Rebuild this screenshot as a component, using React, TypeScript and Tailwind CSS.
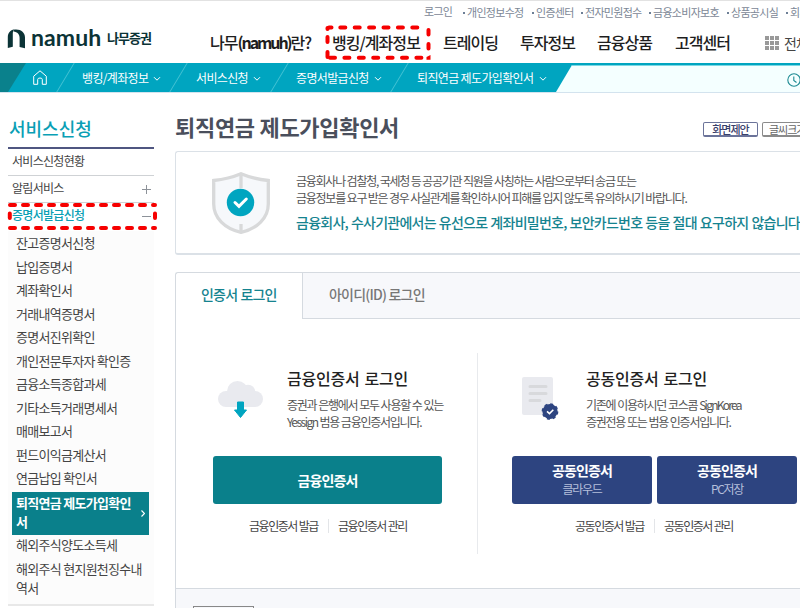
import React from "react";

const util = [
  { t: "개인정보수정", w: "w-[69px]" },
  { t: "인증센터", w: "w-[49px]" },
  { t: "전자민원접수", w: "w-[68px]" },
  { t: "금융소비자보호", w: "w-[78px]" },
  { t: "상품공시실", w: "w-[59px]" },
  { t: "회사소개", w: "w-[60px]" },
];

const nav = [
  { t: "뱅킹/계좌정보", w: "w-[111px]" },
  { t: "트레이딩", w: "w-[77px]" },
  { t: "투자정보", w: "w-[77px]" },
  { t: "금융상품", w: "w-[78px]" },
  { t: "고객센터", w: "w-[89px]" },
];

const crumbs = [
  { t: "뱅킹/계좌정보", w: "w-[113px]", p: "pl-[16px]" },
  { t: "서비스신청", w: "w-[101px]", p: "pl-[17px]" },
  { t: "증명서발급신청", w: "w-[120px]", p: "pl-[16px]" },
  { t: "퇴직연금 제도가입확인서", w: "w-[164px]", p: "pl-[17px]" },
];

const before = [
  "잔고증명서신청",
  "납입증명서",
  "계좌확인서",
  "거래내역증명서",
  "증명서진위확인",
  "개인전문투자자 확인증",
  "금융소득종합과세",
  "기타소득거래명세서",
  "매매보고서",
  "펀드이익금계산서",
  "연금납입 확인서",
];

function Chevron({ className = "" }: { className?: string }) {
  return (
    <svg className={className} width="8" height="6" viewBox="0 0 8 6" fill="none" stroke="currentColor" strokeWidth="1">
      <path d="M1 1.2 4 4.2 7 1.2" />
    </svg>
  );
}

function Logo() {
  return (
    <div className="flex h-[22px] items-center text-[#0b3336]">
      <svg className="mt-[1px]" width="18" height="20" viewBox="0 0 18 20">
        <path d="M.8 19V8.500C.8 4 3.500 1 7 .6C6 2 5.800 3.500 5.800 5.500V17.800Z" fill="#0b3336" />
        <path d="M6.500 .7C13-.6 18 2.800 18 8.500V19.200L12.600 18V9C12.600 5.300 10.500 2.700 6.500 2.400Z" fill="#0b3336" />
      </svg>
      <span className="ml-[6px] w-[75px] pb-[2px] font-[Lato] text-[23px] leading-[20px] font-bold tracking-[0.1px]">namuh</span>
      <span className="ml-[1px] text-[13px] leading-[22px] font-bold tracking-[-1px]">나무증권</span>
    </div>
  );
}

function Header() {
  return (
    <header className="h-[63px] border-t border-[#e2e2e2]">
      <div className="flex h-[22px] pl-[424px] text-[11px] leading-[20px] tracking-[-0.7px] whitespace-nowrap text-[#7c8796]">
        <span className="w-[39px] shrink-0">로그인</span>
        {util.map((u) => (
          <span key={u.t} className={`flex h-[21px] shrink-0 items-center ${u.w}`}>
            <i className="mt-[3px] mr-[2px] size-[2px] bg-[#6d7f96]" />
            {u.t}
          </span>
        ))}
      </div>
      <div className="flex h-[40px] pl-[7px] whitespace-nowrap">
        <div className="w-[203px] shrink-0 pt-[4px]">
          <Logo />
        </div>
        <nav className="flex shrink-0 text-[16px] leading-[38px] font-medium tracking-[-0.95px] text-[#1e1e1e]">
          <a className="w-[122px] shrink-0">
            나무<span className="font-bold tracking-[-2.100px]">(namuh)</span>란?
          </a>
          {nav.map((n) => (
            <a key={n.t} className={`shrink-0 ${n.w}`}>{n.t}</a>
          ))}
        </nav>
        <div className="flex h-[39px] shrink-0 items-center gap-[5px] text-[14px] leading-[38px] tracking-[-1px] text-[#444]">
          <span className="ml-[1px] grid grid-cols-3 gap-[1px]">
            {Array.from({ length: 9 }, (_, i) => (
              <i key={i} className="size-[4px] bg-[#999]" />
            ))}
          </span>
          전체메뉴
        </div>
      </div>
    </header>
  );
}

function Breadcrumb() {
  return (
    <div className="relative h-[30px] border-b border-[#d3e3ee] bg-[#00a5c0] text-white">
      <div className="absolute top-[2px] right-0 bottom-0 left-[556px] border-t border-[#7ad8e4] bg-[#f4ffff] [clip-path:polygon(16px_0,100%_0,100%_100%,0_100%)]">
        <svg className="absolute top-[7px] left-[231px]" width="14" height="14" viewBox="0 0 14 14" fill="none" stroke="#1c8a93" strokeWidth="1.1">
          <circle cx="7" cy="7" r="6.200" />
          <path d="M6.800 3.500V7.500L9.500 9.500" />
        </svg>
      </div>
      <div className="relative flex h-[29px] text-[12px] leading-[27px] tracking-[-0.65px] whitespace-nowrap">
        <i className="w-[26px] bg-[#0a818c] [clip-path:polygon(0_0,100%_0,8px_100%,0_100%)]" />
        <span className="flex w-[39px] items-center pl-[7px]">
          <svg width="14" height="15" viewBox="0 0 14 15" fill="none" stroke="#fff" strokeWidth="1">
            <path d="M.7 6.200 7 .8 13.300 6.200V14.300H9.300V9.500Q9.300 8 7 8T4.700 9.500V14.300H.7Z" />
          </svg>
        </span>
        {crumbs.map((c, i) => (
          <span key={c.t} className={`flex ${c.w}`}>
            <i className="h-full w-px -skew-x-[31deg] bg-[#46c3d4]" />
            <span className={`flex h-[28px] items-center ${c.p}`}>
              {c.t}
              <Chevron className={i === 3 ? "mt-[3px] ml-[6px]" : "mt-[3px] ml-[5px]"} />
            </span>
          </span>
        ))}
      </div>
    </div>
  );
}

function Sidebar() {
  return (
    <aside className="w-[146px] shrink-0 text-[#444]">
      <h2 className="h-[32px] pl-[1px] text-[18px] leading-[26px] font-medium tracking-[0px] text-[#0a9fb5]">서비스신청</h2>
      <div className="h-[28px] border-t-2 border-[#4f5681] pl-[4px] text-[12px] leading-[24px] tracking-[-0.7px]">서비스신청현황</div>
      <div className="flex h-[27px] items-center justify-between border-t border-[#cfd2d5] pr-[3px] pl-[4px] text-[12px] leading-[24px] tracking-[-0.7px]">
        <span className="-mt-[2px]">알림서비스</span>
        <svg width="9" height="9" viewBox="0 0 9 9" stroke="#8d9299"><path d="M0 4.500H9M4.500 0V9" /></svg>
      </div>
      <div className="relative flex h-[29px] justify-between border-t border-[#cfd2d5] pr-[3px] pl-[4px] text-[12px] leading-[24px] font-medium tracking-[-0.7px] text-[#0a9fb5]">
        증명서발급신청
        <i className="mt-[13px] h-px w-[9px] bg-[#8d9299]" />
        <svg className="absolute -top-px -left-px" width="151" height="30" fill="none" stroke="#f60000" strokeWidth="4" strokeLinecap="round">
          <path d="M3 3H148M3 26H148" strokeDasharray="5 8" />
          <path d="M2.800 11.500V16M148 11.500V16" />
        </svg>
      </div>
      <ul className="h-[375px] border-b-2 border-[#e8e8e8] bg-[#fcfcfc] pt-[2px] text-[13px] leading-[19px] tracking-[-0.72px]">
        {before.map((b) => (
          <li key={b} className="h-[23.500px] pl-[8px]">{b}</li>
        ))}
        <li className="mr-[5px] ml-[4px] flex h-[43.500px] items-center justify-between bg-[#0a808b] pr-[4px] pb-[2px] pl-[4px] font-bold text-white">
          <span>퇴직연금 제도가입확인<br />서</span>
          <svg className="mt-[2px]" width="4" height="7" viewBox="0 0 4 7" fill="none" stroke="#fff" strokeWidth="1.200"><path d="M.5.5 3.500 3.500.5 6.500" /></svg>
        </li>
        <li className="h-[23.500px] pl-[8px]">해외주식양도소득세</li>
        <li className="pl-[8px]">해외주식 현지원천징수내<br />역서</li>
      </ul>
    </aside>
  );
}

function Notice() {
  return (
    <section className="flex h-[104px] rounded-l-[3px] border border-r-0 border-b-2 border-[#dbe1e7] pt-[20px] pl-[36px]">
      <svg className="shrink-0" width="58" height="62" viewBox="0 0 58 62">
        <path d="M29 1.700C20 5.500 11 7.500 1.700 8.500V32C1.700 46 13 57 29 60.300C45 57 56.300 46 56.300 32V8.500C47 7.500 38 5.500 29 1.700Z" fill="#f6f8fb" stroke="#d8d9da" strokeWidth="3.300" />
        <path d="M29 2V16M29 52V60" stroke="#d8d9da" strokeWidth="3.300" />
        <circle cx="28.500" cy="30.500" r="13.700" fill="#00a5c0" />
        <path d="M23 30.500 27 34.300 34.300 27" fill="none" stroke="#fff" strokeWidth="3" strokeLinecap="round" />
      </svg>
      <div className="pl-[26px] whitespace-nowrap">
        <p className="text-[12px] leading-[17px] tracking-[-1.250px] text-[#555] [word-spacing:0.2px]">
          금융회사나 검찰청, 국세청 등 공공기관 직원을 사칭하는 사람으로부터 송금 또는<br />
          금융정보를 요구 받은 경우 사실관계를 확인하시어 피해를 입지 않도록 유의하시기 바랍니다.
        </p>
        <p className="mt-[6px] text-[14px] leading-[20px] font-medium tracking-[-0.750px] text-[#15838f] [word-spacing:0.6px]">
          금융회사, 수사기관에서는 유선으로 계좌비밀번호, 보안카드번호 등을 절대 요구하지 않습니다.
        </p>
      </div>
    </section>
  );
}

function Links({ a, b }: { a: string; b: string }) {
  return (
    <div className="flex h-[14px] items-center text-[12px] leading-[14px] tracking-[-1.450px] whitespace-nowrap text-[#444] [word-spacing:0.5px]">
      <span className="w-[79px]">{a}</span>
      <i className="mr-[9px] h-[14px] w-px bg-[#e3e5e8]" />
      <span>{b}</span>
    </div>
  );
}

function Main() {
  return (
    <main className="w-[646px] shrink-0">
      <div className="flex h-[36px] justify-between">
        <h1 className="text-[22px] leading-[22px] font-bold tracking-[-0.300px] whitespace-nowrap text-[#4a4f5c]">퇴직연금 제도가입확인서</h1>
        <div className="flex gap-[4px] pt-[7px] text-[11px] leading-[12px] tracking-[-1px] whitespace-nowrap">
          <span className="h-[15px] w-[55px] rounded-[2px] border border-b-2 border-[#6b7399] text-center font-medium text-[#39406b]">화면제안</span>
          <span className="h-[15px] w-[59px] rounded-[2px] border border-b-2 border-[#8b8b8b] pl-[6px] text-[#666]">글씨크기</span>
        </div>
      </div>
      <Notice />
      <section className="mt-[17px] h-[340px] rounded-tl-[3px] border-t border-l border-[#d5dae0]">
        <div className="flex h-[46px] text-[14px] leading-[42px] font-medium tracking-[-0.800px] whitespace-nowrap">
          <span className="w-[126px] pl-[25px] text-[#15838f] [word-spacing:0.8px]">인증서 로그인</span>
          <span className="flex-1 border-b border-l border-[#d5dae0] bg-[#f7f8fb] pl-[26px] text-[#777]">아이디(ID) 로그인</span>
        </div>
        <div className="flex h-[269px] pt-[34px]">
          <div className="h-[201px] w-[302px] shrink-0 border-r border-[#e8eaed] pl-[37px]">
            <div className="flex h-[103px] pl-[5px]">
              <svg className="mt-[28px]" width="45" height="38" viewBox="0 0 45 38">
                <g fill="#e9eaef">
                  <rect y="10" width="45" height="16" rx="8" />
                  <circle cx="19.500" cy="10.500" r="10.500" />
                  <circle cx="30" cy="11" r="7.300" />
                </g>
                <path d="M19.500 21H25.500V29H28.500L22.500 36.500 16.500 29H19.500Z" fill="#00a5c0" stroke="#00a5c0" strokeLinejoin="round" />
              </svg>
              <div className="pl-[24px] whitespace-nowrap">
                <h3 className="mt-[13px] text-[16px] leading-[24px] font-medium tracking-[-0.200px] text-[#222] [word-spacing:1.5px]">금융인증서 로그인</h3>
                <p className="mt-[6px] text-[12px] leading-[17px] tracking-[-1.250px] text-[#555] [word-spacing:0.4px]">증권과 은행에서 모두 사용할 수 있는<br /><span className="tracking-[-1.500px]">Yessign</span> 범용 금융인증서입니다.</p>
              </div>
            </div>
            <button className="flex h-[48px] w-[229px] items-center justify-center rounded-[3px] bg-[#0a808b] text-[14px] font-bold tracking-[-0.900px] text-white">금융인증서</button>
            <div className="pt-[15px] pl-[36px]"><Links a="금융인증서 발급" b="금융인증서 관리" /></div>
          </div>
          <div className="shrink-0 pl-[34px]">
            <div className="flex h-[103px] pl-[10px]">
              <svg className="mt-[24px]" width="38" height="44" viewBox="0 0 38 44">
                <rect width="31" height="38" rx="2" fill="#e9eaef" />
                <path d="M8 9.500H24M8 16.500H24M8 23.500H18" stroke="#d8d9dc" strokeWidth="3" strokeLinecap="round" />
                <circle cx="28" cy="34.500" r="7.600" fill="#2d4480" stroke="#2d4480" strokeWidth="1.500" strokeDasharray="3 2.970" />
                <path d="M25 34.300 27.500 36.600 31.300 32.800" fill="none" stroke="#fff" strokeWidth="1.600" />
              </svg>
              <div className="pl-[26px] whitespace-nowrap">
                <h3 className="mt-[13px] text-[16px] leading-[24px] font-medium tracking-[-0.200px] text-[#222] [word-spacing:1.5px]">공동인증서 로그인</h3>
                <p className="mt-[6px] text-[12px] leading-[17px] tracking-[-1.250px] text-[#555] [word-spacing:0.4px]">기존에 이용하시던 코스콤 <span className="tracking-[-1.750px]">SignKorea</span><br />증권전용 또는 범용 인증서입니다.</p>
              </div>
            </div>
            <div className="flex gap-[5px]">
              {["클라우드", "PC저장"].map((s) => (
                <button key={s} className="h-[48px] w-[140px] rounded-[3px] bg-[#2d4480] pb-[1px] text-[14px] leading-[19px] font-bold tracking-[-0.900px] text-white">
                  공동인증서
                  <span className="block text-[12px] leading-[18px] font-normal tracking-[-1.300px] text-[#b5bfdb]">{s}</span>
                </button>
              ))}
            </div>
            <div className="pt-[15px] pl-[63px]"><Links a="공동인증서 발급" b="공동인증서 관리" /></div>
          </div>
        </div>
        <div className="h-[24px] border-t border-[#d5dae0] bg-[#f7f8fb] pt-[17px] pl-[17px]">
          <i className="block h-[7px] w-[61px] border border-b-0 border-[#888]" />
        </div>
      </section>
    </main>
  );
}

export default function App() {
  return (
    <div className="relative h-[608px] w-[800px] overflow-hidden bg-white font-['Noto_Sans_CJK_KR',sans-serif]">
      <Header />
      <Breadcrumb />
      <div className="flex gap-[21px] pt-[22px] pl-[8px]">
        <Sidebar />
        <Main />
      </div>
      <svg className="absolute top-[25px] left-[325px]" width="107" height="37" fill="none" stroke="#f60000" strokeWidth="4" strokeLinecap="round">
        <path d="M4 2.500H6.500M15.300 2.500H98" strokeDasharray="5 9.400" />
        <path d="M5 32.700H100" strokeDasharray="5 9.400" />
        <path d="M2.500 3V4M2.500 12V17M2.500 27V32M103.500 5V9.500M103.500 19V23.500" />
        <path d="M101.500 34.700V32L105.500 30V34.700Z" fill="#f60000" stroke="none" />
      </svg>
    </div>
  );
}
